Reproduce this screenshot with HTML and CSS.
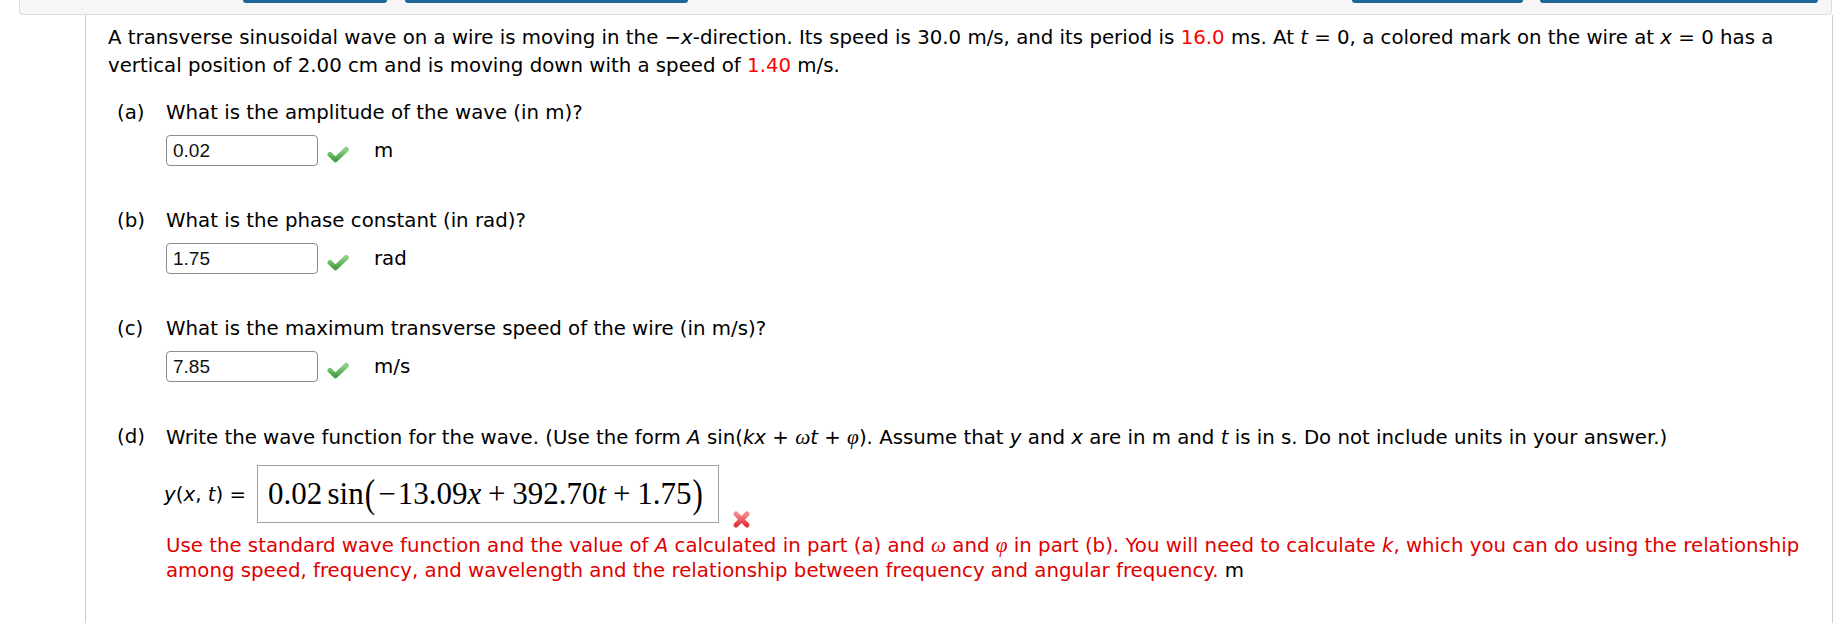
FILE: index.html
```html
<!DOCTYPE html>
<html lang="en">
<head>
<meta charset="utf-8">
<title>Transverse wave question</title>
<link rel="stylesheet" href="styles.css">
</head>
<body>
<div class="topbar">
  <div class="btn-group">
    <span class="btn w1"></span>
    <span class="btn w2"></span>
  </div>
  <div class="btn-group right">
    <span class="btn w3"></span>
    <span class="btn w4"></span>
  </div>
</div>
<main class="panel">
  <p class="intro">A transverse sinusoidal wave on a wire is moving in the &minus;<i>x</i>-direction. Its speed is 30.0 m/s, and its period is <span class="num">16.0</span> ms. At <i>t</i> = 0, a colored mark on the wire at <i>x</i> = 0 has a vertical position of 2.00 cm and is moving down with a speed of <span class="num">1.40</span> m/s.</p>

  <ol class="parts">
    <li class="part">
      <span class="label">(a)</span>
      <div class="body">
        <p class="q">What is the amplitude of the wave (in m)?</p>
        <div class="answer">
          <span class="field">0.02</span>
          <svg class="check" width="22" height="17" viewBox="0 0 22 17"><defs><linearGradient id="ga" x1="0" y1="0" x2="0" y2="1"><stop offset="0" stop-color="#8fd088"/><stop offset="1" stop-color="#46a046"/></linearGradient></defs><polyline points="3,8.5 8.5,13.8 19.3,3.4" fill="none" stroke="url(#ga)" stroke-width="5" stroke-linecap="round" stroke-linejoin="round"/></svg>
          <span class="unit">m</span>
        </div>
      </div>
    </li>
    <li class="part">
      <span class="label">(b)</span>
      <div class="body">
        <p class="q">What is the phase constant (in rad)?</p>
        <div class="answer">
          <span class="field">1.75</span>
          <svg class="check" width="22" height="17" viewBox="0 0 22 17"><defs><linearGradient id="gb" x1="0" y1="0" x2="0" y2="1"><stop offset="0" stop-color="#8fd088"/><stop offset="1" stop-color="#46a046"/></linearGradient></defs><polyline points="3,8.5 8.5,13.8 19.3,3.4" fill="none" stroke="url(#gb)" stroke-width="5" stroke-linecap="round" stroke-linejoin="round"/></svg>
          <span class="unit">rad</span>
        </div>
      </div>
    </li>
    <li class="part">
      <span class="label">(c)</span>
      <div class="body">
        <p class="q">What is the maximum transverse speed of the wire (in m/s)?</p>
        <div class="answer">
          <span class="field">7.85</span>
          <svg class="check" width="22" height="17" viewBox="0 0 22 17"><defs><linearGradient id="gc" x1="0" y1="0" x2="0" y2="1"><stop offset="0" stop-color="#8fd088"/><stop offset="1" stop-color="#46a046"/></linearGradient></defs><polyline points="3,8.5 8.5,13.8 19.3,3.4" fill="none" stroke="url(#gc)" stroke-width="5" stroke-linecap="round" stroke-linejoin="round"/></svg>
          <span class="unit">m/s</span>
        </div>
      </div>
    </li>
    <li class="part last">
      <span class="label">(d)</span>
      <div class="body">
        <p class="q">Write the wave function for the wave. (Use the form <i>A</i> sin(<i>kx</i> + <i class="gr">&omega;</i><i>t</i> + <i class="gr">&phi;</i>). Assume that <i>y</i> and <i>x</i> are in m and <i>t</i> is in s. Do not include units in your answer.)</p>
        <div class="math-row">
          <span class="fn"><i>y</i>(<i>x</i>, <i>t</i>) =</span>
          <span class="mathbox"><span class="mv">0.02</span><span class="op-name">sin</span><span class="paren">(</span><span class="mo first">&minus;</span>13.09<i>x</i><span class="mo">+</span>392.70<i>t</i><span class="mo">+</span>1.75<span class="paren">)</span></span>
          <svg class="cross" width="19" height="19" viewBox="0 0 19 19"><defs><linearGradient id="gx" x1="0" y1="0" x2="0" y2="1"><stop offset="0" stop-color="#f6878a"/><stop offset="1" stop-color="#e2363d"/></linearGradient></defs><path d="M4 4 L15 15 M15 4 L4 15" fill="none" stroke="url(#gx)" stroke-width="5" stroke-linecap="round"/></svg>
        </div>
        <p class="feedback">Use the standard wave function and the value of <i>A</i> calculated in part (a) and <i class="gr">&omega;</i> and <i class="gr">&phi;</i> in part (b). You will need to calculate <i>k</i>, which you can do using the relationship among speed, frequency, and wavelength and the relationship between frequency and angular frequency. <span class="plain">m</span></p>
      </div>
    </li>
  </ol>
</main>
</body>
</html>
```
FILE: styles.css
```css
html, body {
  margin: 0;
  padding: 0;
  background: #ffffff;
}

body {
  font-family: "DejaVu Sans", Verdana, sans-serif;
  font-size: 19.75px;
  color: #000;
  overflow: hidden;
}

.topbar {
  margin-left: 19px;
  width: 1813px;
  height: 15px;
  box-sizing: border-box;
  background: #f6f6f6;
  border: 1px solid #dcdcdc;
  border-top: none;
  border-radius: 0 0 4px 4px;
  display: flex;
  justify-content: space-between;
  padding: 0 13px 0 223px;
}

.btn-group {
  display: flex;
  gap: 18px;
  align-items: flex-start;
}

.btn-group.right {
  gap: 17px;
}

.btn {
  display: block;
  height: 3px;
  background: #1d6597;
  border-radius: 0 0 4px 4px;
}

.w1 { width: 144px; }
.w2 { width: 283px; }
.w3 { width: 171px; }
.w4 { width: 278px; }

.panel {
  margin-left: 85px;
  width: 1748px;
  box-sizing: border-box;
  min-height: 608px;
  border-left: 1px solid #cfcfcf;
  border-right: 1px solid #cfcfcf;
  padding: 9px 8px 0 22px;
}

.intro {
  margin: 0;
  line-height: 28px;
}

.num {
  color: #f00;
}

.parts {
  list-style: none;
  margin: 19px 0 0 9px;
  padding: 0;
}

.part {
  display: grid;
  grid-template-columns: 49px 1fr;
  margin-bottom: 41px;
}

.part.last {
  margin-bottom: 0;
}

.label {
  line-height: 28px;
}

.q {
  margin: 0;
  line-height: 28px;
}

.gr {
  font-family: "Liberation Serif", "DejaVu Serif", serif;
  font-size: 1.08em;
}

.answer {
  margin-top: 8px;
  display: flex;
  align-items: center;
}

.field {
  display: block;
  box-sizing: border-box;
  width: 152px;
  height: 31px;
  border: 1px solid #8c8c8c;
  border-radius: 4px;
  padding: 0 6px;
  font-family: "Liberation Sans", Arial, sans-serif;
  font-size: 19px;
  line-height: 29px;
  color: #111;
}

.check {
  display: block;
  margin-left: 9px;
  align-self: flex-end;
  margin-bottom: 3px;
}

.unit {
  margin-left: 25px;
  line-height: 28px;
}

.math-row {
  margin-top: 13px;
  display: flex;
  align-items: center;
}

.fn {
  margin-left: -2px;
  width: 83px;
  white-space: nowrap;
}

.mathbox {
  display: flex;
  align-items: center;
  box-sizing: border-box;
  margin-left: 10px;
  width: 462px;
  height: 58px;
  border: 1px solid #a0a0a0;
  padding: 0 0 0 10px;
  font-family: "Liberation Serif", "Times New Roman", serif;
  font-size: 31px;
  white-space: nowrap;
}

.op-name {
  margin-left: 0.17em;
}

.paren {
  display: inline-block;
  transform: scaleY(1.3);
  margin: 0 0.03em;
}

.mo {
  margin: 0 0.22em;
}

.mo.first {
  margin-left: 0.08em;
  margin-right: 0.06em;
}

.cross {
  display: block;
  align-self: flex-end;
  margin-left: 13px;
  margin-bottom: -6px;
}

.feedback {
  margin: 10px 0 0;
  line-height: 24.5px;
  color: #e00000;
}

.plain {
  color: #000;
}
```
